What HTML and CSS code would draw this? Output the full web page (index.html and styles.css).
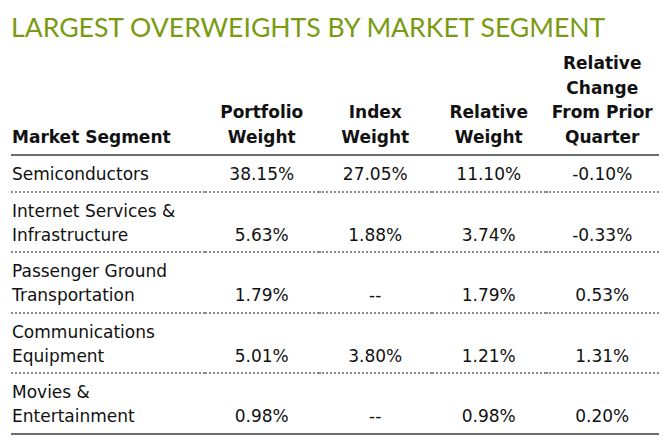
FILE: index.html
```html
<!DOCTYPE html>
<html lang="en">
<head>
<meta charset="utf-8">
<title>Largest Overweights by Market Segment</title>
<link rel="stylesheet" href="styles.css">
</head>
<body>
<main class="panel">
  <h1 class="title">LARGEST OVERWEIGHTS BY MARKET SEGMENT</h1>
  <table class="seg-table">
    <colgroup>
      <col class="col-name">
      <col class="col-num">
      <col class="col-num">
      <col class="col-num">
      <col class="col-num">
    </colgroup>
    <thead>
      <tr>
        <th class="name">Market Segment</th>
        <th>Portfolio<br>Weight</th>
        <th>Index<br>Weight</th>
        <th>Relative<br>Weight</th>
        <th>Relative<br>Change<br>From Prior<br>Quarter</th>
      </tr>
    </thead>
    <tbody>
      <tr>
        <td class="name">Semiconductors</td>
        <td>38.15%</td><td>27.05%</td><td>11.10%</td><td>-0.10%</td>
      </tr>
      <tr>
        <td class="name">Internet Services &amp;<br>Infrastructure</td>
        <td>5.63%</td><td>1.88%</td><td>3.74%</td><td>-0.33%</td>
      </tr>
      <tr>
        <td class="name">Passenger Ground<br>Transportation</td>
        <td>1.79%</td><td>--</td><td>1.79%</td><td>0.53%</td>
      </tr>
      <tr>
        <td class="name">Communications<br>Equipment</td>
        <td>5.01%</td><td>3.80%</td><td>1.21%</td><td>1.31%</td>
      </tr>
      <tr class="last">
        <td class="name">Movies &amp;<br>Entertainment</td>
        <td>0.98%</td><td>--</td><td>0.98%</td><td>0.20%</td>
      </tr>
    </tbody>
  </table>
</main>
</body>
</html>
```
FILE: styles.css
```css
html, body {
  margin: 0;
  padding: 0;
  background: #ffffff;
}

body {
  font-family: "DejaVu Sans", "Open Sans", sans-serif;
  color: #111111;
}

.panel {
  padding: 11px 9px 0 11px;
}

.title {
  margin: 0;
  font-family: "Lato", "Liberation Sans", sans-serif;
  font-weight: 400;
  font-size: 26.6px;
  line-height: 32px;
  color: #7a9a12;
}

.seg-table {
  width: 648px;
  border-collapse: collapse;
  table-layout: fixed;
  margin-top: 8px;
}

.col-name { width: 194px; }
.col-num { width: 113.5px; }

.seg-table th,
.seg-table td {
  padding: 0;
  font-size: 17px;
  text-align: center;
  vertical-align: bottom;
}

.seg-table th {
  font-weight: 700;
  line-height: 24.5px;
  padding-bottom: 5px;
  border-bottom: 2px solid #6d6e71;
}

.seg-table td {
  font-weight: 400;
  line-height: 24px;
  padding: 6px 0 4.5px;
  border-bottom: 2px dotted #8a8a8a;
}

.seg-table .name {
  text-align: left;
  padding-left: 1px;
}

.seg-table tr.last td {
  border-bottom: 2px solid #6d6e71;
}
```
